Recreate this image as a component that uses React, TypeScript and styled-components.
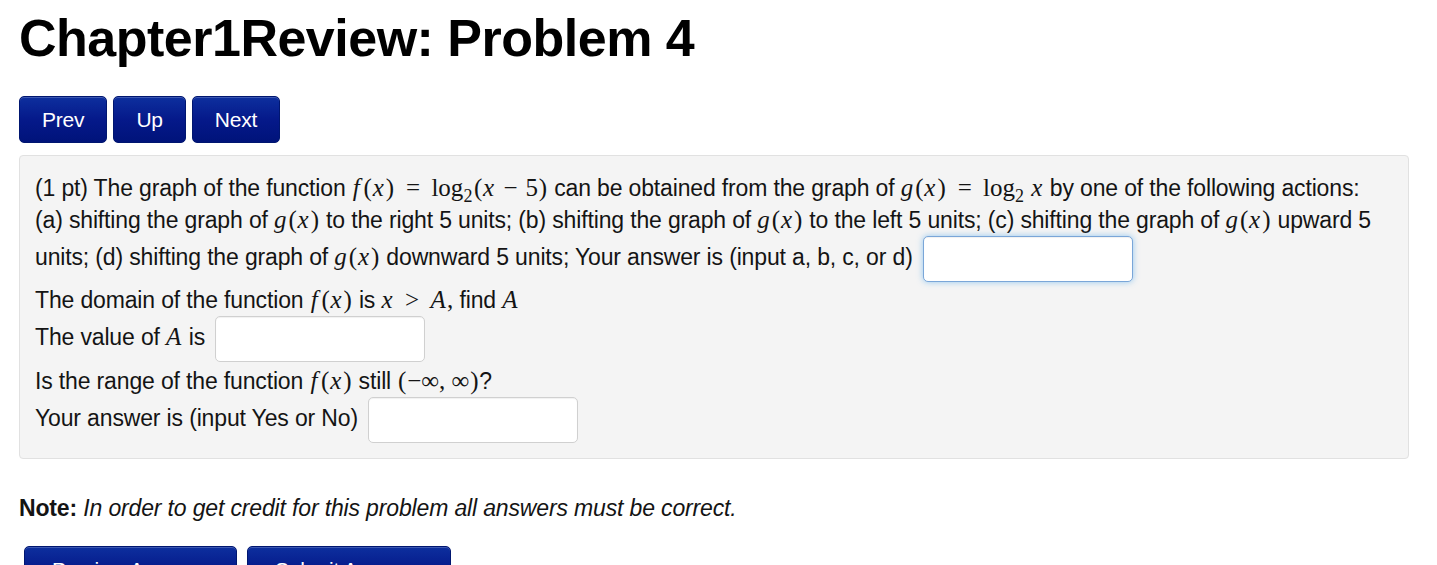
import React from 'react';
import styled, { createGlobalStyle } from 'styled-components';

const GlobalStyle = createGlobalStyle`
  html, body {
    margin: 0;
    padding: 0;
    background: #ffffff;
  }
  body {
    font-family: 'Liberation Sans', Arial, Helvetica, sans-serif;
    color: #141414;
  }
`;

const Page = styled.div`
  padding: 0 28px 0 19px;
  width: 1437px;
  height: 565px;
  box-sizing: border-box;
  overflow: hidden;
`;

const Title = styled.h1`
  margin: 0;
  padding-top: 8px;
  font-size: 52px;
  line-height: 60px;
  font-weight: 700;
  letter-spacing: -0.5px;
  color: #000;
`;

const NavBar = styled.div`
  display: flex;
  gap: 6px;
  margin-top: 28px;
`;

const BlueButton = styled.button<{ $wide?: boolean }>`
  height: 47px;
  padding: 0 ${(p) => (p.$wide ? '27px' : '22px')};
  border: 1px solid #001670;
  border-radius: 5px;
  background: linear-gradient(to bottom, #0d2f9e 0%, #05198a 50%, #00137a 100%);
  color: #ffffff;
  font-family: 'Liberation Sans', Arial, sans-serif;
  font-size: 21px;
  letter-spacing: -0.2px;
  cursor: pointer;
  box-shadow: inset 0 1px 0 rgba(255, 255, 255, 0.2);
`;

const ProblemBox = styled.div`
  margin-top: 12px;
  background: #f4f4f4;
  border: 1px solid #e1e1e1;
  border-radius: 4px;
  padding: 16px 12px 15px 15px;
  font-size: 23px;
  letter-spacing: -0.15px;
  line-height: 32px;
`;

const Para = styled.div<{ $gap?: number }>`
  margin-top: ${(p) => p.$gap ?? 0}px;
  white-space: nowrap;
`;

const Math = styled.span`
  font-family: 'Liberation Serif', 'Times New Roman', serif;
  font-size: 25px;
  letter-spacing: 0;
`;

const Mi = styled.i<{ $f?: boolean }>`
  font-style: italic;
  margin: ${(p) => (p.$f ? '0 0.12em 0 0.04em' : '0 0.05em 0 0')};
`;

const Paren = styled.span`
  margin: 0 0.03em;
`;

const Mo = styled.span<{ $rel?: boolean }>`
  margin: 0 ${(p) => (p.$rel ? '0.45em' : '0.32em')};
`;

const Sub = styled.sub`
  font-size: 18px;
  vertical-align: -6px;
  line-height: 0;
  margin-right: 0.05em;
`;

const AnswerInput = styled.input<{ $focus?: boolean }>`
  width: 210px;
  height: 46px;
  box-sizing: border-box;
  margin-left: 10px;
  vertical-align: middle;
  border-radius: 5px;
  background: #fff;
  border: 1px solid ${(p) => (p.$focus ? '#7aa6d8' : '#d0d0d0')};
  box-shadow: ${(p) =>
    p.$focus
      ? 'inset 0 1px 1px rgba(0,0,0,0.06), 0 0 6px rgba(82,168,236,0.6)'
      : 'inset 0 1px 1px rgba(0,0,0,0.06)'};
  outline: none;
`;

const Note = styled.p`
  margin: 34px 0 0 0;
  font-size: 23px;
  letter-spacing: -0.15px;
  line-height: 30px;
  color: #141414;

  b {
    font-weight: 700;
  }
  i {
    font-style: italic;
  }
`;

const SubmitBar = styled.div`
  display: flex;
  gap: 10px;
  margin-top: 23px;
  padding-left: 5px;
`;

const Fx = ({ name }: { name: string }) => (
  <Math>
    <Mi $f={name === 'f'}>{name}</Mi>
    <Paren>(</Paren>
    <Mi>x</Mi>
    <Paren>)</Paren>
  </Math>
);

const VarA = () => (
  <Math>
    <Mi>A</Mi>
  </Math>
);

export default function App() {
  const gx = <Fx name="g" />;
  return (
    <>
      <GlobalStyle />
      <Page>
        <Title>Chapter1Review: Problem 4</Title>
        <NavBar>
          <BlueButton>Prev</BlueButton>
          <BlueButton>Up</BlueButton>
          <BlueButton>Next</BlueButton>
        </NavBar>
        <ProblemBox>
          <Para>
            (1 pt) The graph of the function{' '}
            <Math>
              <Mi $f>f</Mi>
              <Paren>(</Paren>
              <Mi>x</Mi>
              <Paren>)</Paren>
              <Mo $rel>=</Mo>log<Sub>2</Sub>
              <Paren>(</Paren>
              <Mi>x</Mi>
              <Mo>−</Mo>5<Paren>)</Paren>
            </Math>{' '}
            can be obtained from the graph of{' '}
            <Math>
              <Mi>g</Mi>
              <Paren>(</Paren>
              <Mi>x</Mi>
              <Paren>)</Paren>
              <Mo $rel>=</Mo>log<Sub>2</Sub> <Mi>x</Mi>
            </Math>{' '}
            by one of the following actions:
            <br />
            (a) shifting the graph of {gx} to the right 5 units; (b) shifting the graph of {gx} to the
            left 5 units; (c) shifting the graph of {gx} upward 5
            <br />
            units; (d) shifting the graph of {gx} downward 5 units; Your answer is (input a, b, c, or
            d)
            <AnswerInput $focus />
          </Para>
          <Para $gap={2}>
            The domain of the function <Fx name="f" /> is{' '}
            <Math>
              <Mi>x</Mi>
              <Mo $rel>&gt;</Mo>
              <Mi>A</Mi>,
            </Math>{' '}
            find <VarA />
            <br />
            The value of <VarA /> is
            <AnswerInput />
          </Para>
          <Para $gap={3}>
            Is the range of the function <Fx name="f" /> still{' '}
            <Math>
              <Paren>(</Paren>−∞, ∞<Paren>)</Paren>
            </Math>
            ?
            <br />
            Your answer is (input Yes or No)
            <AnswerInput />
          </Para>
        </ProblemBox>
        <Note>
          <b>Note:</b> <i>In order to get credit for this problem all answers must be correct.</i>
        </Note>
        <SubmitBar>
          <BlueButton $wide>Preview Answers</BlueButton>
          <BlueButton $wide>Submit Answers</BlueButton>
        </SubmitBar>
      </Page>
    </>
  );
}
